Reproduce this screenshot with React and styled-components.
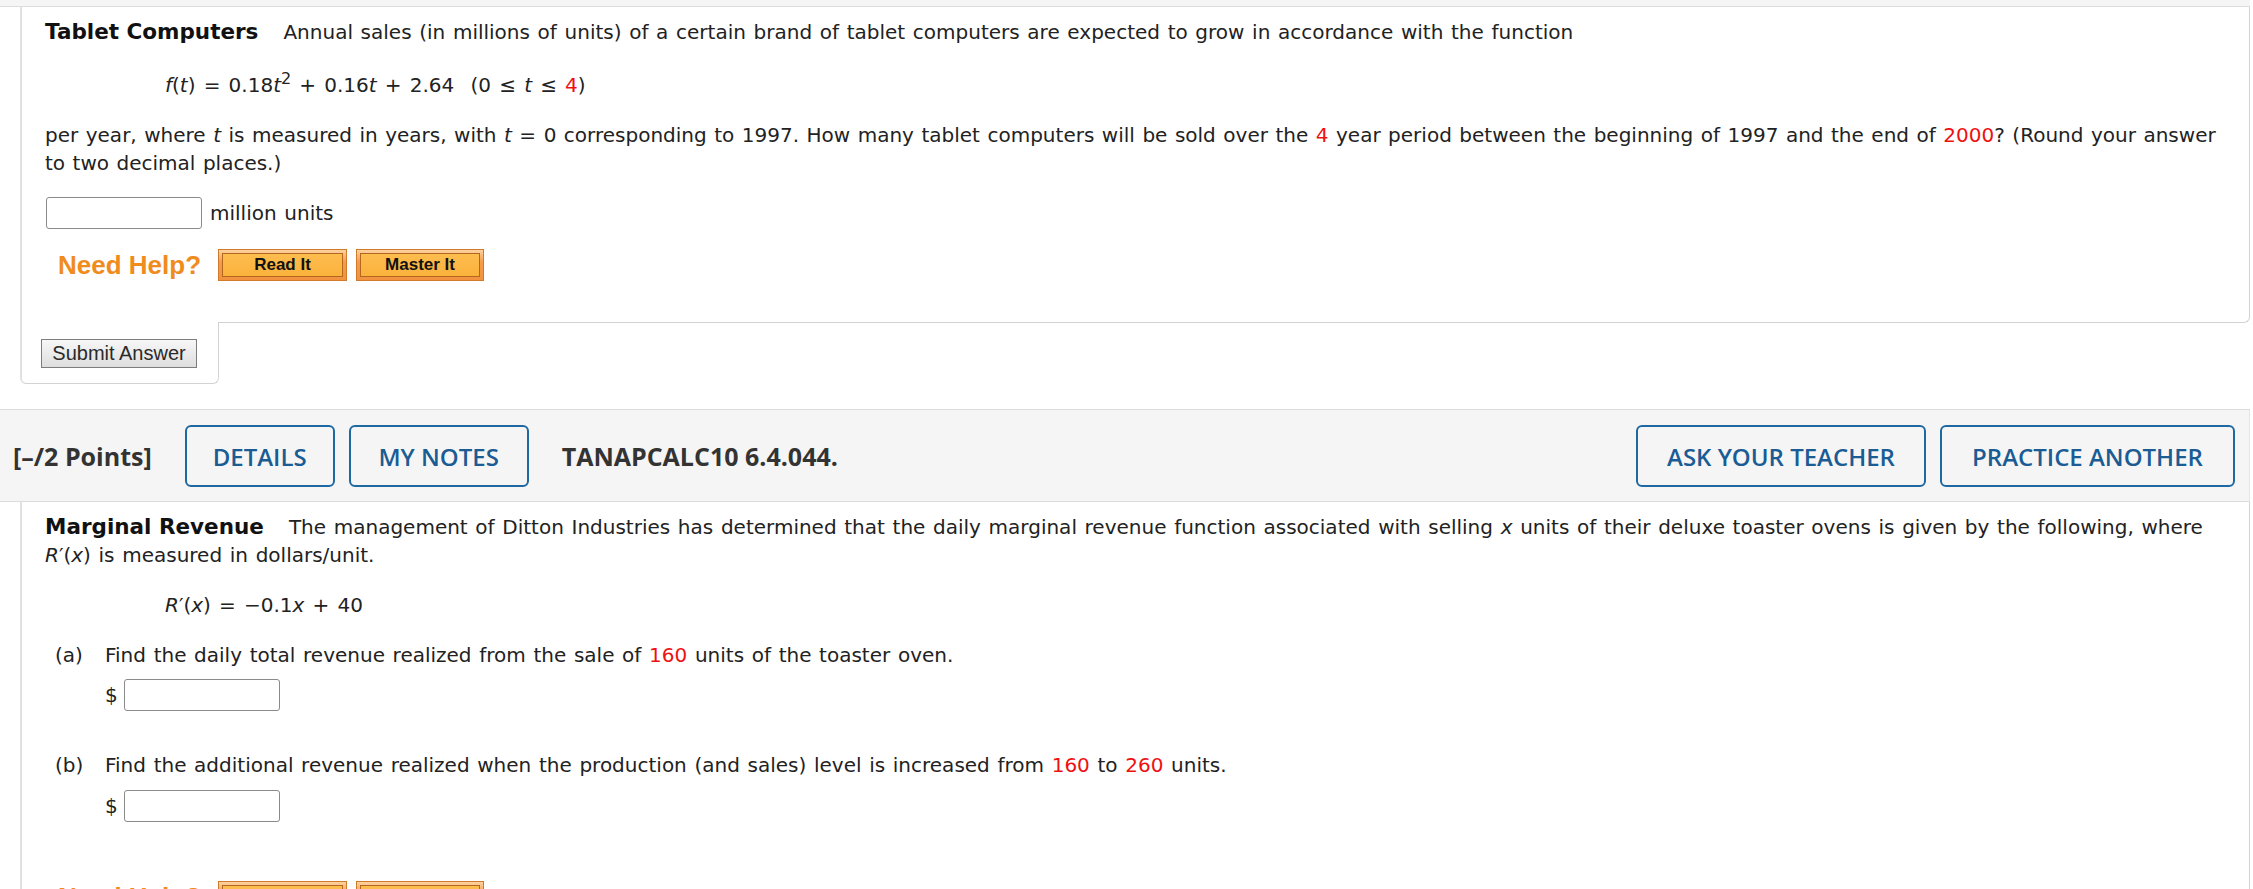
import React from "react";
import styled, { createGlobalStyle } from "styled-components";

const GlobalStyle = createGlobalStyle`
  html, body { margin: 0; padding: 0; background: #ffffff; }
  body {
    font-family: "DejaVu Sans", Verdana, sans-serif;
    color: #222222;
  }
  * { box-sizing: border-box; }
`;

const Page = styled.div`
  width: 2253px;
  overflow: hidden;
`;

const TopStrip = styled.div`
  height: 7px;
  margin-right: 3px;
  background: #f5f5f5;
  border-bottom: 1px solid #dcdcdc;
`;

const QuestionCard = styled.div`
  margin: 0 3px 0 20px;
  padding: ${(p) => p.$pad || "11px 20px 41px 23px"};
  border-left: 2px solid #e1e1e1;
  border-right: 1px solid #d3d3d3;
  border-bottom: ${(p) => (p.$open ? "none" : "1px solid #d3d3d3")};
  border-radius: 0 0 6px 0;
  background: #ffffff;
  font-size: 20px;
  line-height: 28px;
  word-spacing: 1.3px;
`;

const Para = styled.p`
  margin: ${(p) => p.$mt || 0}px 0 0 0;
  word-spacing: ${(p) => p.$ws || "inherit"};
`;

const Title = styled.b`
  font-size: 21.5px;
  font-weight: bold;
  color: #111111;
  word-spacing: 0;
  margin-right: 25px;
`;

const Formula = styled.div`
  margin: ${(p) => p.$mt}px 0 0 120px;
  white-space: nowrap;
  word-spacing: 1.8px;
`;

const Sup = styled.sup`
  font-size: 0.8em;
  line-height: 0;
  vertical-align: 0.5em;
`;

const Red = styled.span`
  color: #ee1111;
`;

const AnswerRow = styled.div`
  display: flex;
  align-items: center;
  gap: 8px;
  margin: ${(p) => p.$mt}px 0 0 ${(p) => p.$ml || 0}px;
`;

const AnswerInput = styled.div`
  width: 156px;
  height: 32px;
  border: 1px solid #8a8a8a;
  border-radius: 3px;
  background: #ffffff;
`;

const Unit = styled.span`
  font-size: 20px;
`;

const Dollar = styled.span`
  font-size: 20px;
  width: 11px;
`;

const HelpRow = styled.div`
  display: flex;
  align-items: center;
  margin: ${(p) => p.$mt}px 0 0 13px;
`;

const HelpLabel = styled.span`
  font-family: "Liberation Sans", Arial, sans-serif;
  font-weight: bold;
  font-size: 26px;
  line-height: 32px;
  color: #f08b1e;
  word-spacing: 0;
  margin-right: 17px;
`;

const HelpButton = styled.div`
  width: ${(p) => p.$w}px;
  height: 32px;
  margin-right: 9px;
  padding: 3px;
  border: 1px solid #d17a2a;
  background: linear-gradient(#fcd3a0, #f49c4a 40%, #f1923f);
`;

const HelpInner = styled.div`
  height: 100%;
  display: flex;
  align-items: center;
  justify-content: center;
  border: 1px solid #b4681f;
  background: linear-gradient(#fdbd4f, #fbb23c);
  font-family: "Liberation Sans", Arial, sans-serif;
  font-weight: bold;
  font-size: 17px;
  color: #111111;
  word-spacing: 0;
`;

const SubmitTab = styled.div`
  width: 199px;
  margin: -1px 0 0 20px;
  padding: 17px 20px 15px 19px;
  border-left: 2px solid #e1e1e1;
  border-right: 1px solid #d3d3d3;
  border-bottom: 1px solid #d3d3d3;
  border-radius: 0 0 6px 6px;
  background: #ffffff;
`;

const SubmitButton = styled.div`
  width: 156px;
  height: 29px;
  display: flex;
  align-items: center;
  justify-content: center;
  border: 1px solid #7d7d7d;
  background: linear-gradient(#f7f7f7, #dedede);
  font-family: "Liberation Sans", Arial, sans-serif;
  font-size: 20px;
  color: #2a2a2a;
`;

const HeaderBar = styled.div`
  display: flex;
  align-items: center;
  margin: 25px 3px 0 0;
  padding: 15px 14px 14px 13px;
  background: #f5f5f5;
  border-top: 1px solid #dcdcdc;
  border-bottom: 1px solid #dcdcdc;
  border-right: 1px solid #e4e4e4;
  font-family: "Open Sans", "Noto Sans", sans-serif;
`;

const Points = styled.span`
  font-size: 25px;
  font-weight: 700;
  color: #333333;
  margin-right: ${(p) => p.$mr}px;
`;

const OutlineButton = styled.div`
  height: 62px;
  min-width: ${(p) => p.$w}px;
  display: flex;
  align-items: center;
  justify-content: center;
  margin-right: ${(p) => p.$mr || 0}px;
  border: 2px solid #1f69a3;
  border-radius: 6px;
  color: #1a5c93;
  font-size: 24px;
  font-weight: 600;
`;

const Spacer = styled.div`
  flex: 1;
`;

const PartRow = styled.div`
  display: flex;
  margin: ${(p) => p.$mt}px 0 0 10px;
`;

const PartLabel = styled.span`
  width: 50px;
  flex: none;
`;

const PartBody = styled.div`
  display: flex;
  flex-direction: column;
`;

const Help = ({ mt }) => (
  <HelpRow $mt={mt}>
    <HelpLabel>Need Help?</HelpLabel>
    <HelpButton $w={129}>
      <HelpInner>Read It</HelpInner>
    </HelpButton>
    <HelpButton $w={128}>
      <HelpInner>Master It</HelpInner>
    </HelpButton>
  </HelpRow>
);

export default function App() {
  return (
    <Page>
      <GlobalStyle />
      <TopStrip />
      <QuestionCard>
        <Para>
          <Title>Tablet Computers</Title>Annual sales (in millions of units) of a certain brand of
          tablet computers are expected to grow in accordance with the function
        </Para>
        <Formula $mt={25}>
          <i>f</i>(<i>t</i>) = 0.18<i>t</i>
          <Sup>2</Sup> + 0.16<i>t</i> + 2.64&nbsp;&nbsp;(0 ≤ <i>t</i> ≤ <Red>4</Red>)
        </Formula>
        <Para $mt={22} $ws="1.15px">
          per year, where <i>t</i> is measured in years, with <i>t</i> = 0 corresponding to 1997. How
          many tablet computers will be sold over the <Red>4</Red> year period between the beginning
          of 1997 and the end of <Red>2000</Red>? (Round your answer
          <br />
          to two decimal places.)
        </Para>
        <AnswerRow $mt={20} $ml={1}>
          <AnswerInput />
          <Unit>million units</Unit>
        </AnswerRow>
        <Help mt={20} />
      </QuestionCard>
      <SubmitTab>
        <SubmitButton>Submit Answer</SubmitButton>
      </SubmitTab>

      <HeaderBar>
        <Points $mr={33}>[–/2 Points]</Points>
        <OutlineButton $w={150} $mr={14}>DETAILS</OutlineButton>
        <OutlineButton $w={180} $mr={33}>MY NOTES</OutlineButton>
        <Points $mr={0}>TANAPCALC10 6.4.044.</Points>
        <Spacer />
        <OutlineButton $w={290} $mr={14}>ASK YOUR TEACHER</OutlineButton>
        <OutlineButton $w={295}>PRACTICE ANOTHER</OutlineButton>
      </HeaderBar>

      <QuestionCard $open $pad="11px 20px 200px 23px">
        <Para>
          <Title>Marginal Revenue</Title>The management of Ditton Industries has determined that
          the daily marginal revenue function associated with selling <i>x</i> units of their deluxe
          toaster ovens is given by the following, where
          <br />
          <i>R</i>′(<i>x</i>) is measured in dollars/unit.
        </Para>
        <Formula $mt={22}>
          <i>R</i>′(<i>x</i>) = −0.1<i>x</i> + 40
        </Formula>
        <PartRow $mt={22}>
          <PartLabel>(a)</PartLabel>
          <PartBody>
            <span>
              Find the daily total revenue realized from the sale of <Red>160</Red> units of the
              toaster oven.
            </span>
            <AnswerRow $mt={10}>
              <Dollar>$</Dollar>
              <AnswerInput />
            </AnswerRow>
          </PartBody>
        </PartRow>
        <PartRow $mt={40}>
          <PartLabel>(b)</PartLabel>
          <PartBody>
            <span>
              Find the additional revenue realized when the production (and sales) level is
              increased from <Red>160</Red> to <Red>260</Red> units.
            </span>
            <AnswerRow $mt={11}>
              <Dollar>$</Dollar>
              <AnswerInput />
            </AnswerRow>
          </PartBody>
        </PartRow>
        <Help mt={59} />
      </QuestionCard>
    </Page>
  );
}
